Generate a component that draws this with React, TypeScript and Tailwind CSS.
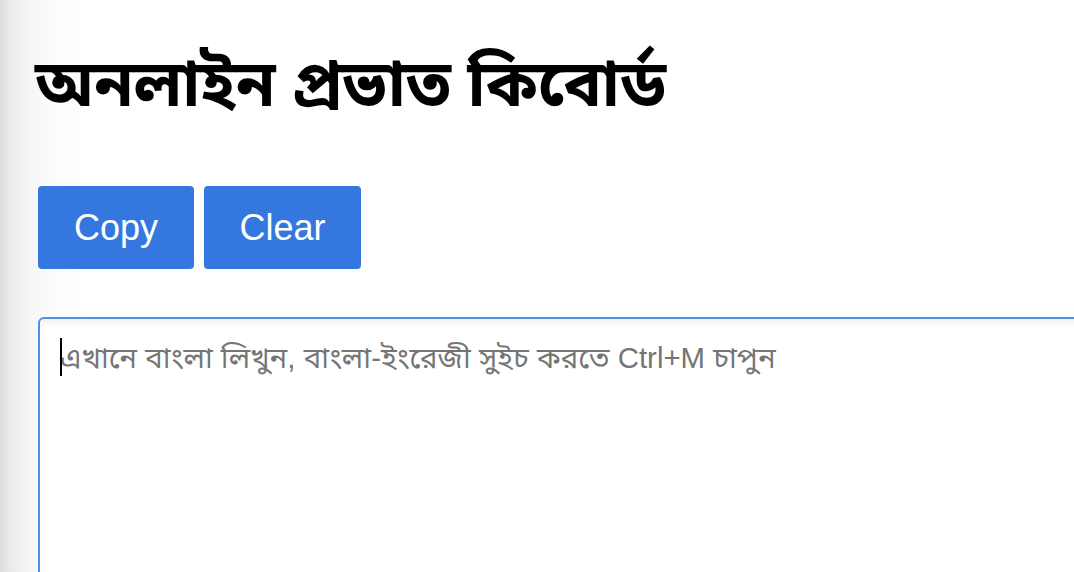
export default function App() {
  return (
    <div className="h-[572px] w-[1074px] overflow-hidden bg-[linear-gradient(to_right,#dedede_0px,#ececec_12px,#f6f6f6_30px,#fcfcfc_55px,#ffffff_90px)] pl-[38px] pt-[49px]">
      <h1 className="m-0 -ml-[3px] h-[82px] font-['Noto_Sans_Bengali','Noto_Serif_Bengali','Lohit_Bengali','FreeSerif','Noto_Sans',sans-serif] text-[64px] leading-[82px] font-bold text-black">
        অনলাইন প্রভাত কিবোর্ড
      </h1>
      <div className="mt-[55px] flex gap-[10px]">
        <button className="h-[83px] rounded-[4px] bg-[#3478df] px-[36px] font-['Liberation_Sans',Arial,sans-serif] text-[36px] text-white">
          Copy
        </button>
        <button className="h-[83px] w-[157px] rounded-[4px] bg-[#3478df] font-['Liberation_Sans',Arial,sans-serif] text-[36px] text-white">
          Clear
        </button>
      </div>
      <div className="relative mt-[48px]">
        <textarea
          placeholder="এখানে বাংলা লিখুন, বাংলা-ইংরেজী সুইচ করতে Ctrl+M চাপুন"
          className="block h-[300px] w-[1100px] resize-none rounded-tl-[6px] border-2 border-[#4a93df] bg-white px-[20px] pt-[20px] font-['Liberation_Sans','Noto_Sans_Bengali',Arial,sans-serif] text-[29.4px] leading-[38px] text-black shadow-[inset_0_4px_6px_rgba(0,0,0,0.06)] outline-none placeholder:text-[#757575]"
        />
        <span className="pointer-events-none absolute left-[22px] top-[21px] h-[38px] w-[2px] bg-black" />
      </div>
    </div>
  );
}
